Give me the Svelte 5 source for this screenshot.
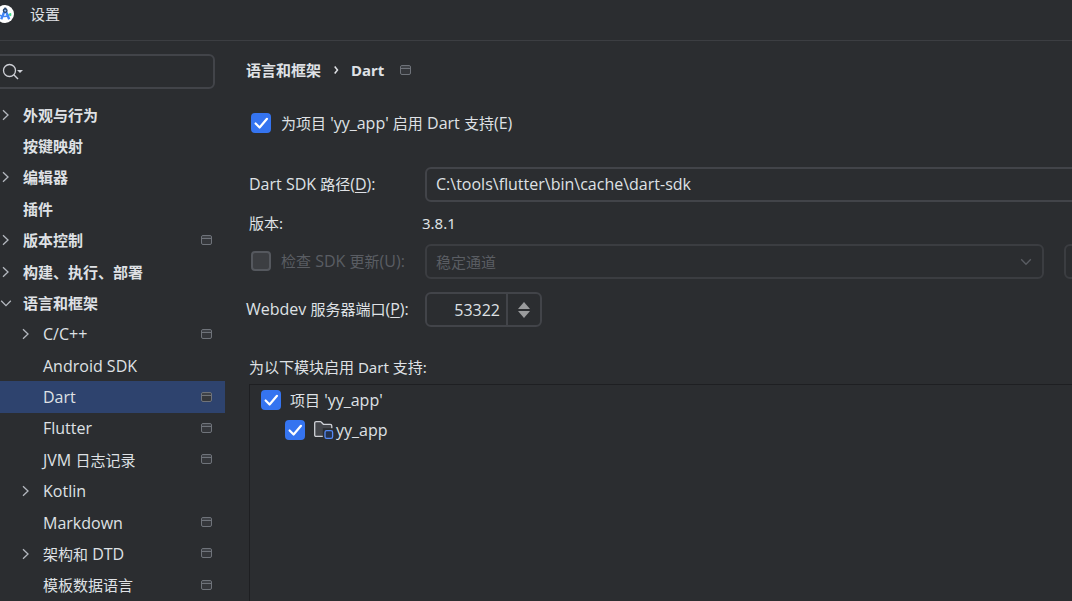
<script>
  let search = $state('');
  let selected = $state('Dart');
  let enableDart = $state(true);
  let checkUpdates = $state(false);
  let sdkPath = $state('C:\\tools\\flutter\\bin\\cache\\dart-sdk');
  let channel = $state('stable');
  let port = $state('53322');
  let projectEnabled = $state(true);
  let moduleEnabled = $state(true);

  const items = [
    { name: '外观与行为', level: 0, arrow: 'right' },
    { name: '按键映射', level: 0 },
    { name: '编辑器', level: 0, arrow: 'right' },
    { name: '插件', level: 0 },
    { name: '版本控制', level: 0, arrow: 'right', project: true },
    { name: '构建、执行、部署', level: 0, arrow: 'right' },
    { name: '语言和框架', level: 0, arrow: 'down' },
    { name: 'C/C++', level: 1, arrow: 'right', project: true },
    { name: 'Android SDK', level: 1 },
    { name: 'Dart', level: 1, project: true },
    { name: 'Flutter', level: 1, project: true },
    { name: 'JVM 日志记录', level: 1, project: true },
    { name: 'Kotlin', level: 1, arrow: 'right' },
    { name: 'Markdown', level: 1, project: true },
    { name: '架构和 DTD', level: 1, arrow: 'right', project: true },
    { name: '模板数据语言', level: 1, project: true },
  ];

  // Splits a label into Latin and Chinese runs, Latin ones at odd indexes
  function runs(text) {
    return text.split(/([\x20-\x7e]+)/);
  }

  function select(event, name) {
    event.preventDefault();
    selected = name;
  }

  function step(delta) {
    port = String(Number(port) + delta);
  }
</script>

{#snippet mixed(text)}
  {#each runs(text) as run, i}{#if i % 2}<span class="latin">{run}</span>{:else}{run}{/if}{/each}
{/snippet}

{#snippet projectIcon()}
  <svg class="project-icon" width="12" height="11" viewBox="0 0 12 11" fill="none" stroke="#6f737a">
    <rect x="0.5" y="0.5" width="10" height="9" rx="1.5" fill="#35373b" />
    <path d="M1 3.5h9" />
    <path d="M1.5 2h8" stroke="#4b4e54" />
  </svg>
{/snippet}

{#snippet tick()}
  <svg class="tick" width="20" height="20" viewBox="0 0 20 20" fill="none">
    <path d="M4.6 10.5l4 4L16 5.8" stroke="#fff" stroke-width="2.2" stroke-linecap="round" stroke-linejoin="round" />
  </svg>
{/snippet}

<div class="window">
  <header class="titlebar">
    <svg class="logo" width="18" height="18" viewBox="0 0 18 18">
      <circle cx="9" cy="9" r="9" fill="#fff" />
      <path d="M12.6 9.4l2.2-1v2.4z" fill="#3ddc84" stroke="#3ddc84" />
      <path d="M8.6 6L5.2 14.2M9.8 6l3.4 8.2" stroke="#4285f4" stroke-width="2.4" fill="none" />
      <path d="M3.6 10.2q5 2.6 9.6 0" stroke="#4285f4" stroke-width="1.6" fill="none" />
      <circle cx="9.2" cy="5.6" r="1.8" fill="#8fb6f0" stroke="#27456b" stroke-width="1.3" />
      <path d="M8.2 2.6h2v1.8h-2z" fill="#27456b" />
    </svg>
    <span>设置</span>
  </header>

  <div class="body">
    <aside class="sidebar">
      <div class="search">
        <svg width="22" height="18" viewBox="0 0 22 18" fill="none">
          <circle cx="7.5" cy="7.5" r="6" stroke="#ced0d6" stroke-width="1.3" />
          <path d="M11.8 11.8l4.2 4.2" stroke="#ced0d6" stroke-width="1.4" />
          <path d="M15 7h6l-3 3z" fill="#ced0d6" />
        </svg>
        <input type="text" aria-label="搜索" bind:value={search} />
      </div>

      <ul class="tree">
        {#each items as item}
          <li>
            <a
              href="#settings"
              class="item"
              class:top={item.level === 0}
              class:child={item.level === 1}
              class:selected={selected === item.name}
              onclick={(e) => select(e, item.name)}
            >
              <span class="arrow">
                {#if item.arrow}
                  <svg width="12" height="12" viewBox="0 0 12 12" fill="none" stroke="#b4b8bf" stroke-width="1.3">
                    {#if item.arrow === 'right'}
                      <path d="M3 1.3l5 4.7-5 4.7" />
                    {:else}
                      <path d="M1.2 3.8L6 8.6l4.8-4.8" />
                    {/if}
                  </svg>
                {/if}
              </span>
              <span class="name">{@render mixed(item.name)}</span>
              {#if item.project}
                {@render projectIcon()}
              {/if}
            </a>
          </li>
        {/each}
      </ul>
    </aside>

    <main class="content">
      <h1 class="breadcrumb">
        <span>语言和框架</span>
        <svg width="6" height="10" viewBox="0 0 6 10" fill="none" stroke="#dfe1e5" stroke-width="1.5">
          <path d="M1.7 1.5L4.5 5 1.7 8.5" />
        </svg>
        <span>Dart</span>
        {@render projectIcon()}
      </h1>

      <label class="check-row enable">
        <span class="check">
          <input type="checkbox" bind:checked={enableDart} />
          {@render tick()}
        </span>
        <span>{@render mixed("为项目 'yy_app' 启用 Dart 支持(E)")}</span>
      </label>

      <div class="form">
        <label class="label" for="sdk">{@render mixed('Dart SDK 路径')}<span class="latin">(<u>D</u>):</span></label>
        <input id="sdk" class="control path latin" type="text" bind:value={sdkPath} />

        <span class="label">版本:</span>
        <span>3.8.1</span>

        <label class="check-row disabled">
          <span class="check">
            <input type="checkbox" disabled bind:checked={checkUpdates} />
            {@render tick()}
          </span>
          <span>{@render mixed('检查 SDK 更新(U):')}</span>
        </label>
        <div class="channel">
          <div class="select">
            <select class="control" aria-label="通道" disabled bind:value={channel}>
              <option value="stable">稳定通道</option>
            </select>
            <svg width="12" height="8" viewBox="0 0 12 8" fill="none" stroke="#5a5d63" stroke-width="1.3">
              <path d="M1.2 1.3L6 6.2l4.8-4.9" />
            </svg>
          </div>
          <button class="control check-now" aria-label="立即检查" disabled></button>
        </div>

        <label for="port">{@render mixed('Webdev 服务器端口')}<span class="latin">(<u>P</u>):</span></label>
        <div class="control spinner">
          <input id="port" class="latin" type="text" bind:value={port} />
          <div class="steps">
            <button aria-label="增加" onclick={() => step(1)}>
              <svg width="12" height="7" viewBox="0 0 12 7"><path d="M0 7l6-7 6 7z" fill="#9a9b9d" /></svg>
            </button>
            <button aria-label="减少" onclick={() => step(-1)}>
              <svg width="12" height="7" viewBox="0 0 12 7"><path d="M0 0l6 7 6-7z" fill="#9a9b9d" /></svg>
            </button>
          </div>
        </div>
      </div>

      <h2 class="modules-title">为以下模块启用 Dart 支持:</h2>
      <div class="modules">
        <label class="module">
          <span class="check">
            <input type="checkbox" bind:checked={projectEnabled} />
            {@render tick()}
          </span>
          <span>{@render mixed("项目 'yy_app'")}</span>
        </label>
        <label class="module nested">
          <span class="check">
            <input type="checkbox" bind:checked={moduleEnabled} />
            {@render tick()}
          </span>
          <span class="folder latin">
            <svg width="20" height="18" viewBox="0 0 20 18" fill="none">
              <path
                d="M9.5 15.4H2.2Q.7 15.4.7 13.9V2.2Q.7.7 2.2.7h4.2q.6 0 1 .5l2 2.1h6.8q1.6 0 1.6 1.6v3.6"
                fill="#43454a"
                stroke="#ced0d6"
                stroke-width="1.3"
              />
              <rect x="8.8" y="7.2" width="11" height="10.8" fill="#2b2d30" />
              <rect x="11" y="9.7" width="7.6" height="7.6" rx="1.6" fill="#25324d" stroke="#548af7" stroke-width="1.3" />
            </svg>
            yy_app
          </span>
        </label>
      </div>
    </main>
  </div>
</div>

<style>
  :global(body) {
    background: #2b2d30;
  }

  .window {
    display: flex;
    flex-direction: column;
    min-height: 100vh;
    overflow: hidden;
    background: #2b2d30;
    color: #dfe1e5;
    font-family: 'Noto Sans', 'Noto Sans CJK SC', sans-serif;
    font-size: 15px;
    line-height: 20px;
  }

  .window * {
    box-sizing: border-box;
  }

  svg {
    display: block;
    flex: none;
  }

  input,
  select,
  button {
    margin: 0;
    color: inherit;
    font: inherit;
  }

  .latin {
    font-family: 'Open Sans', sans-serif;
    font-size: 16px;
  }

  .titlebar {
    display: flex;
    align-items: center;
    gap: 16px;
    height: 41px;
    padding-bottom: 12px;
    border-bottom: 1px solid #3c3e42;
  }

  .logo {
    margin-left: -4px;
  }

  .body {
    display: flex;
    flex: 1;
  }

  /* Settings tree */
  .sidebar {
    display: flex;
    flex-direction: column;
    flex: none;
    width: 225px;
    padding-top: 13px;
  }

  .search {
    display: flex;
    align-items: center;
    height: 35px;
    margin: 0 10px 10px -8px;
    padding-left: 8px;
    border: 2px solid #424449;
    border-radius: 6px;
  }

  .search input {
    flex: 1;
    min-width: 0;
    border: 0;
    outline: 0;
    background: none;
  }

  .tree {
    display: grid;
    flex: 1;
    grid-auto-rows: 1fr;
    margin: 0;
    padding: 0;
    list-style: none;
  }

  .item {
    display: flex;
    align-items: center;
    gap: 11px;
    height: 100%;
    padding-right: 12px;
    color: inherit;
    text-decoration: none;
  }

  .top {
    font-weight: 700;
  }

  .child {
    padding-left: 20px;
  }

  .selected {
    background: #2e436e;
  }

  .arrow {
    flex: none;
    width: 12px;
  }

  .name {
    flex: 1;
    white-space: nowrap;
  }

  /* Dart page */
  .content {
    display: flex;
    flex: 1;
    flex-direction: column;
    min-width: 0;
    padding-left: 21px;
  }

  .breadcrumb {
    display: flex;
    align-items: center;
    gap: 12px;
    height: 58px;
    margin: 0;
    font-size: 15px;
    font-weight: 700;
  }

  .breadcrumb .project-icon {
    margin-left: 4px;
  }

  .check-row {
    display: flex;
    align-items: center;
    gap: 10px;
    padding-left: 5px;
    white-space: nowrap;
  }

  .enable {
    height: 48px;
    margin-bottom: 17px;
  }

  .disabled {
    color: #5a5d63;
  }

  .check {
    position: relative;
    flex: none;
    width: 20px;
    height: 20px;
  }

  .check input {
    display: block;
    width: 20px;
    height: 20px;
    border: 2px solid #5a5d63;
    border-radius: 4px;
    appearance: none;
  }

  .check input:checked {
    border-color: #3574f0;
    background: #3574f0;
  }

  .check input:disabled {
    border-color: #55585e;
    background: #3c3e42;
  }

  .tick {
    position: absolute;
    inset: 0;
    pointer-events: none;
  }

  input:not(:checked) + .tick {
    display: none;
  }

  .form {
    display: grid;
    grid-template-columns: 176px 1fr;
    grid-template-rows: 41px 36px 41px 55px;
    align-items: center;
    white-space: nowrap;
  }

  .form > label {
    padding-bottom: 2px;
  }

  .label {
    padding-left: 3px;
  }

  u {
    text-underline-offset: 2px;
  }

  .control {
    height: 35px;
    margin: 3px;
    border: 2px solid #424449;
    border-radius: 6px;
    background: none;
  }

  .path {
    min-width: 0;
    margin-right: -8px;
    padding: 0 9px 2px;
    outline: 0;
  }

  .channel {
    display: flex;
    min-width: 0;
  }

  .select {
    position: relative;
    display: flex;
    flex: 1;
  }

  .select select {
    flex: 1;
    padding: 0 9px;
    border-color: #3b3d41;
    color: #5a5d63;
    opacity: 1;
    appearance: none;
  }

  .select svg {
    position: absolute;
    top: 17px;
    right: 15px;
    pointer-events: none;
  }

  .check-now {
    flex: none;
    width: 40px;
    margin-right: -32px;
    margin-left: 17px;
    border-color: #3b3d41;
  }

  .spinner {
    display: flex;
    width: 117px;
  }

  .spinner input {
    flex: 1;
    min-width: 0;
    padding: 0 6px;
    border: 0;
    outline: 0;
    background: none;
    text-align: right;
  }

  .steps {
    display: flex;
    flex-direction: column;
    align-items: center;
    justify-content: center;
    gap: 2px;
    width: 34px;
    border-left: 2px solid #424449;
  }

  .steps button {
    padding: 0;
    border: 0;
    background: none;
  }

  .modules-title {
    margin: 0;
    padding: 20px 3px 7px;
    font-size: 15px;
    font-weight: 400;
  }

  .modules {
    flex: 1;
    margin-left: 3px;
    border-top: 1px solid #1e1f22;
    border-left: 1px solid #1e1f22;
  }

  .module {
    display: flex;
    align-items: center;
    gap: 9px;
    height: 30px;
    padding-left: 11px;
  }

  .nested {
    padding-left: 35px;
  }

  .folder {
    display: flex;
    align-items: center;
    gap: 2px;
  }
</style>
